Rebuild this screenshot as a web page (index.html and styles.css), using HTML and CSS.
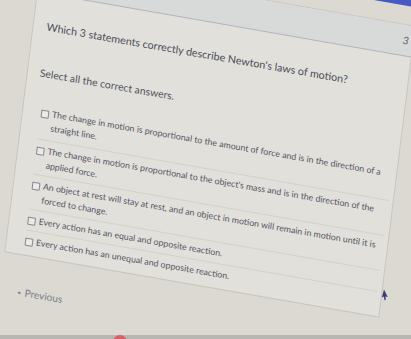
FILE: index.html
```html
<!DOCTYPE html>
<html lang="en">
<head>
    <meta charset="UTF-8">
    <meta name="viewport" content="width=device-width, initial-scale=1.0">
    <title>Newton's laws - Question 3</title>
    <link rel="stylesheet" href="styles.css">
</head>
<body>

    <div class="screen">
        <div class="topbar"></div>

        <div class="card">
            <div class="card-head">
                <span class="q-num">3</span>
            </div>

            <div class="card-body">
                <h1 class="question">Which 3 statements correctly describe Newton's laws of motion?</h1>
                <p class="hint">Select all the correct answers.</p>

                <ul class="options">
                    <li class="option">
                        <span class="check"></span>
                        <span class="option-text">The change in motion is proportional to the amount of force and is in the direction of a straight line.</span>
                    </li>
                    <li class="option">
                        <span class="check"></span>
                        <span class="option-text">The change in motion is proportional to the object's mass and is in the direction of the applied force.</span>
                    </li>
                    <li class="option">
                        <span class="check"></span>
                        <span class="option-text">An object at rest will stay at rest, and an object in motion will remain in motion until it is forced to change.</span>
                    </li>
                    <li class="option">
                        <span class="check"></span>
                        <span class="option-text">Every action has an equal and opposite reaction.</span>
                    </li>
                    <li class="option">
                        <span class="check"></span>
                        <span class="option-text">Every action has an unequal and opposite reaction.</span>
                    </li>
                </ul>
            </div>
        </div>

        <div class="nav">
            <span class="nav-arrow">&#9666;</span>
            <span>Previous</span>
        </div>
    </div>

    <div class="bezel">
        <span class="led"></span>
    </div>

    <!-- ponteiro do mouse -->
    <svg class="cursor" width="9" height="12" viewBox="0 0 9 12">
        <path d="M3 0.5 L0.8 8.6 L2.9 7.6 L3.4 11.2 L4.8 11 L4.4 7.4 L6.7 7.9 Z" fill="#3b3e76"/>
    </svg>

</body>
</html>
```

FILE: styles.css
```css
body {
    margin: 0;
    width: 411px;
    height: 339px;
    overflow: hidden;
    position: relative;
    display: flex;
    flex-direction: column;
    background-color: #dbd9d1;
    font-family: Lato, "Open Sans", sans-serif;
}

/* a foto da tela fica inclinada */
.screen {
    flex: none;
    width: 480px;
    height: 335px;
    transform-origin: 0 0;
    transform: matrix(1, 0.175, -0.125, 1, 0, -81.75);
}

.topbar {
    height: 16px;
    background-color: #4759c3;
}

.card {
    margin: 18px 0 0 45px;
    width: 375px;
    box-sizing: border-box;
    background-color: #e2e0da;
    border: 1px solid #c6c5c1;
}

.card-head {
    height: 30px;
    display: flex;
    align-items: center;
    justify-content: flex-end;
    padding-right: 4px;
    background-color: #d8d9d9;
    border-bottom: 1px solid #b3b5bd;
}

.q-num {
    font-size: 10.5px;
    font-style: italic;
    color: #666876;
}

.card-body {
    padding: 25px 0 4px 13px;
}

.question {
    margin: 0;
    font-size: 10.6px;
    line-height: 14px;
    font-weight: 400;
    color: #4b4d5b;
}

.hint {
    margin: 32px 0 0 -1px;
    font-size: 10.3px;
    line-height: 14px;
    color: #515361;
}

.options {
    list-style: none;
    margin: 22px 0 0;
    padding: 0 0 0 5px;
    width: 351px;
}

.option {
    display: flex;
    gap: 3px;
    padding: 3px 0;
    border-bottom: 1px solid #d2d1cd;
    font-size: 8.7px;
    line-height: 14px;
    color: #545665;
}

.option:first-child {
    padding-bottom: 5px;
}

.option:last-child {
    border-bottom: none;
}

.check {
    flex: none;
    width: 6px;
    height: 6px;
    margin-top: 4px;
    border: 1px solid #868894;
    border-radius: 1px;
    background-color: #ebeae6;
}

.nav {
    margin: 30px 0 0 63px;
    display: flex;
    align-items: center;
    gap: 4px;
    font-size: 10px;
    color: #7c7e8a;
}

.nav-arrow {
    font-size: 6px;
}

.bezel {
    flex: none;
    height: 4px;
    position: relative;
    background-color: #b8b7b2;
}

.led {
    position: absolute;
    left: 113px;
    top: 0;
    width: 14px;
    height: 14px;
    border-radius: 50%;
    background-color: #de5b68;
}

.cursor {
    position: absolute;
    left: 381px;
    top: 289px;
}
```
